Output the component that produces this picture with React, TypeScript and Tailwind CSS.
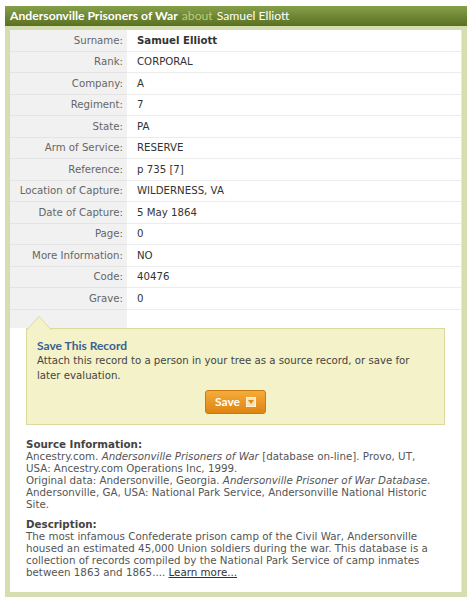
import React from 'react';

type Row = { label: string; value: string; bold?: boolean };

const rows: Row[] = [
  { label: 'Surname:', value: 'Samuel Elliott', bold: true },
  { label: 'Rank:', value: 'CORPORAL' },
  { label: 'Company:', value: 'A' },
  { label: 'Regiment:', value: '7' },
  { label: 'State:', value: 'PA' },
  { label: 'Arm of Service:', value: 'RESERVE' },
  { label: 'Reference:', value: 'p 735 [7]' },
  { label: 'Location of Capture:', value: 'WILDERNESS, VA' },
  { label: 'Date of Capture:', value: '5 May 1864' },
  { label: 'Page:', value: '0' },
  { label: 'More Information:', value: 'NO' },
  { label: 'Code:', value: '40476' },
  { label: 'Grave:', value: '0' },
];

const verdana = { fontFamily: '"DejaVu Sans", Verdana, sans-serif' };

export default function App() {
  return (
    <div className="min-h-[604px] bg-white pt-[6px] pl-[5px]">
      <div className="w-[462px]">
        {/* Title bar */}
        <div className="h-[20px] bg-gradient-to-b from-[#86a049] to-[#5a7121] px-[5px] flex items-center font-['Lato',sans-serif] text-[12.2px] leading-none text-white whitespace-nowrap">
          <span className="font-bold">Andersonville Prisoners of War</span>
          <span className="ml-[4px] text-[#bccd80]">about</span>
          <span className="ml-[4px]">Samuel Elliott</span>
        </div>

        <div
          className="border-x-[5px] border-t-[4px] border-b-[5px] border-[#d5deb1] bg-white text-[10.2px]"
          style={verdana}
        >
          <div className="border-r border-[#e6ead8]">
            {/* Record table */}
            {rows.map((r) => (
              <div key={r.label} className="grid grid-cols-[117px_1fr] h-[21.5px]">
                <div className="bg-[#f1f1f1] border-b border-[#e4e4e4] flex items-center justify-end pr-[4px] text-[#666]">
                  {r.label}
                </div>
                <div
                  className={`border-b border-[#ececec] flex items-center pl-[10px] text-[#333] ${r.bold ? 'font-bold' : ''}`}
                >
                  {r.value}
                </div>
              </div>
            ))}
            <div className="grid grid-cols-[117px_1fr] h-[18px]">
              <div className="bg-[#f1f1f1]" />
              <div />
            </div>

            {/* Save callout */}
            <div className="px-[16px]">
              <div className="relative bg-[#f4f2c8] border border-[#dcd99f] pt-[9px] pb-[10px] px-[10px]">
                <svg
                  className="absolute left-[0px] top-[-13px]"
                  width="26"
                  height="14"
                  viewBox="0 0 26 14"
                >
                  <polygon points="0,13.5 12,0.5 24,13.5" fill="#f4f2c8" stroke="#dcd99f" strokeWidth="1" />
                  <rect x="0.5" y="13" width="23" height="2" fill="#f4f2c8" />
                </svg>
                <div className="font-['Lato',sans-serif] font-bold text-[12px] leading-[15px] text-[#3d5f8f]">
                  Save This Record
                </div>
                <p className="leading-[15px] text-[#444]">
                  Attach this record to a person in your tree as a source record, or save for later evaluation.
                </p>
                <div className="flex justify-center mt-[7px]">
                  <button className="h-[24px] w-[61px] rounded-[3px] border border-[#c77a12] bg-gradient-to-b from-[#f5ac38] to-[#de8410] flex items-center justify-center gap-[6px] font-['Lato',sans-serif] font-bold text-[12px] text-white">
                    <span>Save</span>
                    <span className="w-[10px] h-[10px] bg-[#fbe2b5] border border-[#fff3dc] flex items-center justify-center">
                      <svg width="6" height="4" viewBox="0 0 6 4">
                        <polygon points="0,0 6,0 3,4" fill="#e08a16" />
                      </svg>
                    </span>
                  </button>
                </div>
              </div>
            </div>

            {/* Source information */}
            <div className="pl-[16px] pr-[28px] pt-[13px] pb-[14px] text-[10.3px] leading-[12px] text-[#555]">
              <div className="font-bold text-[#444]">Source Information:</div>
              <p>
                Ancestry.com. <i>Andersonville Prisoners of War</i> [database on-line]. Provo, UT, USA: Ancestry.com Operations Inc, 1999.
              </p>
              <p>
                Original data: Andersonville, Georgia. <i>Andersonville Prisoner of War Database</i>. Andersonville, GA, USA: National Park Service, Andersonville National Historic Site.
              </p>
              <div className="font-bold text-[#444] mt-[8px]">Description:</div>
              <p>
                The most infamous Confederate prison camp of the Civil War, Andersonville housed an estimated 45,000 Union soldiers during the war. This database is a collection of records compiled by the National Park Service of camp inmates between 1863 and 1865....{' '}
                <a className="underline text-[#333]">Learn more...</a>
              </p>
            </div>
          </div>
        </div>
      </div>
    </div>
  );
}
